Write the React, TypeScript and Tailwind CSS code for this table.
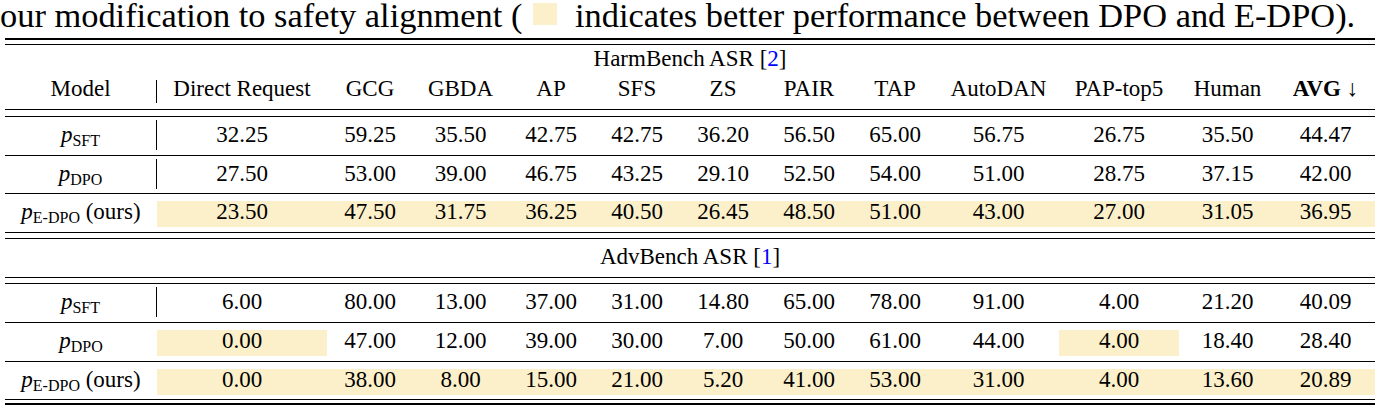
import React from "react";

const GRID =
  "grid grid-cols-[152px_170px_86px_95px_86px_86px_86px_86px_86px_121px_120px_97px_99px]";
const HL = "bg-[#fcf0ca]";

const headers = [
  "Direct Request",
  "GCG",
  "GBDA",
  "AP",
  "SFS",
  "ZS",
  "PAIR",
  "TAP",
  "AutoDAN",
  "PAP-top5",
  "Human",
];

type RowData = {
  sub: string;
  ours?: boolean;
  vals: string[];
  hl: boolean[];
  h: string;
};

const all = (v: boolean) => Array.from({ length: 12 }, () => v);

const harm: RowData[] = [
  {
    sub: "SFT",
    vals: ["32.25", "59.25", "35.50", "42.75", "42.75", "36.20", "56.50", "65.00", "56.75", "26.75", "35.50", "44.47"],
    hl: all(false),
    h: "h-[38px]",
  },
  {
    sub: "DPO",
    vals: ["27.50", "53.00", "39.00", "46.75", "43.25", "29.10", "52.50", "54.00", "51.00", "28.75", "37.15", "42.00"],
    hl: all(false),
    h: "h-[37px]",
  },
  {
    sub: "E-DPO",
    ours: true,
    vals: ["23.50", "47.50", "31.75", "36.25", "40.50", "26.45", "48.50", "51.00", "43.00", "27.00", "31.05", "36.95"],
    hl: all(true),
    h: "h-[38px]",
  },
];

const adv: RowData[] = [
  {
    sub: "SFT",
    vals: ["6.00", "80.00", "13.00", "37.00", "31.00", "14.80", "65.00", "78.00", "91.00", "4.00", "21.20", "40.09"],
    hl: all(false),
    h: "h-[38px]",
  },
  {
    sub: "DPO",
    vals: ["0.00", "47.00", "12.00", "39.00", "30.00", "7.00", "50.00", "61.00", "44.00", "4.00", "18.40", "28.40"],
    hl: [true, false, false, false, false, false, false, false, false, true, false, false],
    h: "h-[38px]",
  },
  {
    sub: "E-DPO",
    ours: true,
    vals: ["0.00", "38.00", "8.00", "15.00", "21.00", "5.20", "41.00", "53.00", "31.00", "4.00", "13.60", "20.89"],
    hl: all(true),
    h: "h-[37px]",
  },
];

function Rule({ thick }: { thick?: boolean }) {
  return <div className={thick ? "h-[2px] bg-black" : "h-px bg-black"} />;
}

function DoubleRule({ gap }: { gap: string }) {
  return (
    <div>
      <Rule />
      <div className={gap} />
      <Rule />
    </div>
  );
}

function ModelLabel({ sub, ours }: { sub: string; ours?: boolean }) {
  return (
    <span className="whitespace-nowrap">
      <span className="italic">p</span>
      <sub className="text-[16px]">{sub}</sub>
      {ours ? <span> (ours)</span> : null}
    </span>
  );
}

function DataRow({ row }: { row: RowData }) {
  return (
    <div className={`${GRID} ${row.h}`}>
      <div className="flex">
        <div className="flex-1 pt-[7px] text-center leading-[22px]">
          <ModelLabel sub={row.sub} ours={row.ours} />
        </div>
        {!row.hl[0] && <div className="mt-[3px] h-[30px] w-px bg-black" />}
      </div>
      {row.vals.map((v, i) => (
        <div key={i} className="pt-[7px]">
          <div className={`h-[26px] text-center leading-[22px] ${row.hl[i] ? HL : ""}`}>{v}</div>
        </div>
      ))}
    </div>
  );
}

function Ref({ n }: { n: string }) {
  return (
    <span>
      [<span className="text-[#0000ff]">{n}</span>]
    </span>
  );
}

export default function App() {
  return (
    <div className="h-[409px] w-[1380px] overflow-hidden bg-white font-['Liberation_Serif',serif] text-black">
      <div className="h-[38px] whitespace-nowrap text-[34.4px] leading-[31px]">
        our modification to safety alignment (
        <span className="ml-[11px] mr-[9px] inline-block h-[22px] w-[24px] bg-[#fcf0ca] align-[2px]" /> indicates
        better performance between DPO and E-DPO).
      </div>

      <div className="ml-[5px] w-[1370px] text-[23px]">
        <Rule thick />
        <div className="h-[4px]" />
        <Rule />

        <div className="h-[31px] pt-[3px] text-center leading-[22px]">
          HarmBench ASR <Ref n="2" />
        </div>

        <div className={`${GRID} h-[33px]`}>
          <div className="flex">
            <div className="flex-1 pt-[2px] text-center leading-[22px]">Model</div>
            <div className="mt-[4px] h-[23px] w-px bg-black" />
          </div>
          {headers.map((h) => (
            <div key={h} className="whitespace-nowrap pt-[2px] text-center leading-[22px]">
              {h}
            </div>
          ))}
          <div className="whitespace-nowrap pt-[2px] text-center leading-[22px]">
            <span className="font-bold">AVG</span> ↓
          </div>
        </div>

        <DoubleRule gap="h-[6px]" />

        <DataRow row={harm[0]} />
        <Rule />
        <DataRow row={harm[1]} />
        <Rule />
        <DataRow row={harm[2]} />

        <DoubleRule gap="h-[5px]" />

        <div className="h-[38px] pt-[7px] text-center leading-[22px]">
          AdvBench ASR <Ref n="1" />
        </div>

        <DoubleRule gap="h-[5px]" />

        <DataRow row={adv[0]} />
        <Rule />
        <DataRow row={adv[1]} />
        <Rule />
        <DataRow row={adv[2]} />

        <Rule />
        <div className="h-[3px]" />
        <Rule thick />
      </div>
    </div>
  );
}
